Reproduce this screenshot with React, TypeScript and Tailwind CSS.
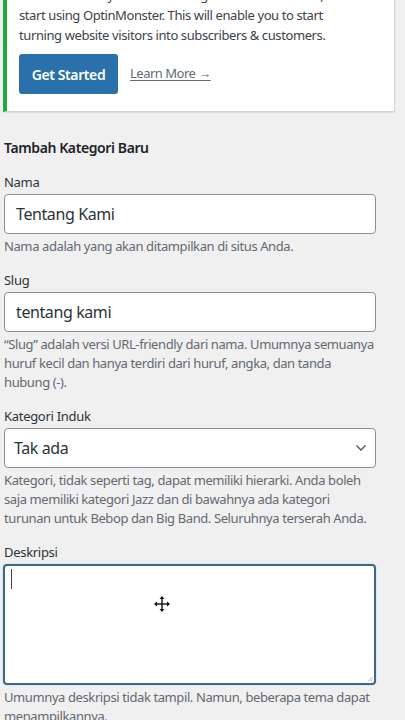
import React from "react";

const font = { fontFamily: '"Noto Sans", "Open Sans", sans-serif' };

function Field({
  label,
  children,
  help,
}: {
  label: string;
  children: React.ReactNode;
  help: React.ReactNode;
}) {
  return (
    <div className="mb-[14px]">
      <label className="block text-[13px] tracking-[-0.3px] leading-[20px] text-[#2c3338] mb-[2px]">{label}</label>
      {children}
      <p className="mt-[3px] text-[13px] tracking-[-0.4px] leading-[19px] text-[#646970] whitespace-nowrap">{help}</p>
    </div>
  );
}

export default function App() {
  return (
    <div className="w-[405px] h-[720px] overflow-hidden bg-[#f0f0f1]" style={font}>
      <div className="ml-[3px] w-[392px] -mt-[16px] bg-white border border-[#d3d4d6] border-l-4 border-l-[#22a83c] shadow-[0_1px_1px_rgba(0,0,0,0.06)] pl-[12px] pr-[10px] pb-[17px]">
        <p className="text-[13px] tracking-[-0.4px] leading-[20px] text-[#3c434a] whitespace-nowrap">
          Please connect your account to get the most out of it, and
          <br />
          start using OptinMonster. This will enable you to start
          <br />
          turning website visitors into subscribers &amp; customers.
        </p>
        <div className="mt-[9px] flex items-center gap-[12px]">
          <button className="h-[40px] w-[99px] rounded-[3px] bg-[#2a70aa] text-white text-[14px] tracking-[-0.4px] font-semibold">
            Get Started
          </button>
          <a className="text-[13px] tracking-[-0.5px] text-[#5f6b78] underline underline-offset-2">Learn More →</a>
        </div>
      </div>

      <div className="pl-[4px] pr-[29px]">
        <h2 className="mt-[26px] text-[14px] tracking-[-0.4px] leading-[20px] font-semibold text-[#1d2327]">Tambah Kategori Baru</h2>
        <div className="mt-[14px]">
          <Field label="Nama" help="Nama adalah yang akan ditampilkan di situs Anda.">
            <div className="h-[40px] rounded-[4px] border border-[#8c8f94] bg-white flex items-center pl-[11px] text-[16px] tracking-[-0.4px] text-[#2c3338]">
              Tentang Kami
            </div>
          </Field>
          <Field
            label="Slug"
            help={
              <>
                “Slug” adalah versi URL-friendly dari nama. Umumnya semuanya
                <br />
                huruf kecil dan hanya terdiri dari huruf, angka, dan tanda
                <br />
                hubung (-).
              </>
            }
          >
            <div className="h-[40px] rounded-[4px] border border-[#8c8f94] bg-white flex items-center pl-[11px] text-[16px] tracking-[-0.4px] text-[#2c3338]">
              tentang kami
            </div>
          </Field>
          <Field
            label="Kategori Induk"
            help={
              <>
                Kategori, tidak seperti tag, dapat memiliki hierarki. Anda boleh
                <br />
                saja memiliki kategori Jazz dan di bawahnya ada kategori
                <br />
                turunan untuk Bebop dan Big Band. Seluruhnya terserah Anda.
              </>
            }
          >
            <div className="h-[40px] rounded-[4px] border border-[#8c8f94] bg-white flex items-center justify-between pl-[9px] pr-[8px] text-[16px] tracking-[-0.4px] text-[#2c3338]">
              <span>Tak ada</span>
              <svg width="12" height="8" viewBox="0 0 12 8" fill="none" stroke="#50575e" strokeWidth="1.4">
                <path d="M1.5 1.5 L6 6 L10.5 1.5" />
              </svg>
            </div>
          </Field>
          <Field
            label="Deskripsi"
            help={
              <>
                Umumnya deskripsi tidak tampil. Namun, beberapa tema dapat
                <br />
                menampilkannya.
              </>
            }
          >
            <div className="relative h-[121px] -ml-[1px] rounded-[4px] border-2 border-[#3f6885] bg-white shadow-[0_0_0_1px_#d6e7f4]">
              <div className="absolute left-[6px] top-[3px] w-[1px] h-[20px] bg-[#444]" />
              <svg
                className="absolute left-[149px] top-[30px]"
                width="16"
                height="16"
                viewBox="0 0 16 16"
                fill="#111"
              >
                <rect x="7.3" y="2" width="1.4" height="12" />
                <rect x="2" y="7.3" width="12" height="1.4" />
                <path d="M8 0 L10.5 3 L5.5 3 Z" />
                <path d="M8 16 L10.5 13 L5.5 13 Z" />
                <path d="M0 8 L3 5.5 L3 10.5 Z" />
                <path d="M16 8 L13 5.5 L13 10.5 Z" />
              </svg>
              <svg className="absolute right-[1px] bottom-[1px]" width="6" height="6" viewBox="0 0 6 6" stroke="#9aa0a6" strokeWidth="0.8">
                <path d="M5.5 1 L1 5.5 M5.5 3.5 L3.5 5.5" />
              </svg>
            </div>
          </Field>
        </div>
      </div>
    </div>
  );
}
